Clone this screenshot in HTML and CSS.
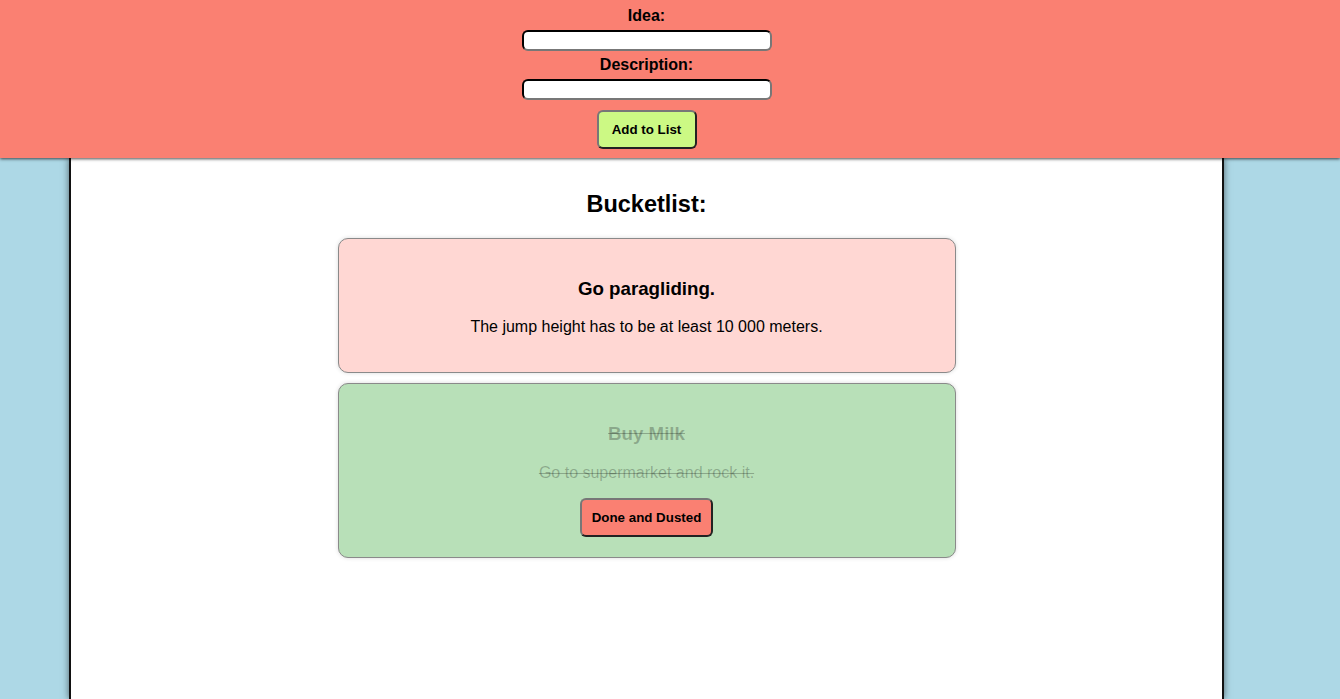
FILE: index.html
```html
<!DOCTYPE html>
<html>
<head>
<meta charset="utf-8">
<link rel="stylesheet" href="styles.css">
</head>
<body>
<header class="top">
  <form class="idea-form">
    <label class="lbl" for="idea">Idea:</label>
    <input class="field" id="idea" type="text">
    <label class="lbl lbl-2" for="desc">Description:</label>
    <input class="field" id="desc" type="text">
    <button class="btn btn-add" type="button">Add to List</button>
  </form>
</header>
<main class="main">
  <h2 class="title">Bucketlist:</h2>
  <div class="card card-open">
    <h3 class="card-h">Go paragliding.</h3>
    <p class="card-p">The jump height has to be at least 10 000 meters.</p>
  </div>
  <div class="card card-done">
    <h3 class="card-h done-text">Buy Milk</h3>
    <p class="card-p done-text">Go to supermarket and rock it.</p>
    <button class="btn btn-done" type="button">Done and Dusted</button>
  </div>
</main>
</body>
</html>
```
FILE: styles.css
```css
html, body {
  margin: 0;
  padding: 0;
}
body {
  background: #add8e6;
  font-family: "Liberation Sans", Arial, sans-serif;
  color: #000;
  min-height: 699px;
  overflow: hidden;
}
.top {
  position: relative;
  z-index: 2;
  background: #fa8072;
  box-shadow: 0 1px 3px rgba(0,0,0,0.7);
  height: 158px;
  box-sizing: border-box;
  padding-top: 7px;
}
.idea-form {
  width: 1155px;
  margin-left: 69px;
  display: flex;
  flex-direction: column;
  align-items: center;
}
.lbl {
  font-weight: bold;
  font-size: 16px;
  line-height: 18px;
  display: block;
}
.lbl-2 {
  margin-top: 5px;
}
.field {
  margin: 5px 0 0;
  width: 250px;
  height: 21px;
  box-sizing: border-box;
  border: 2px inset #767676;
  border-color: #222 #777 #777 #222;
  border-radius: 6px;
  background: #fff;
  padding: 0 4px;
}
.btn {
  font-family: "Liberation Sans", Arial, sans-serif;
  font-weight: bold;
  font-size: 13.33px;
  color: #000;
  border: 2px solid;
  border-color: #777 #222 #222 #777;
  border-radius: 6px;
  cursor: pointer;
}
.btn-add {
  margin-top: 10px;
  width: 100px;
  height: 39px;
  background: #ccf984;
  padding: 0;
}
.main {
  position: relative;
  z-index: 1;
  width: 1155px;
  margin-left: 69px;
  box-sizing: border-box;
  min-height: 541px;
  background: #fff;
  border-left: 2px solid #111;
  border-right: 2px solid #111;
  box-shadow: 0 0 7px rgba(0,0,0,0.55);
  padding-top: 1px;
  display: flex;
  flex-direction: column;
  align-items: center;
}
.title {
  font-size: 23.5px;
  font-weight: bold;
  margin: 31px 0 20px;
  line-height: 28px;
}
.card {
  width: 618px;
  box-sizing: border-box;
  border: 1px solid #8a8a8a;
  border-radius: 10px;
  padding: 20px;
  text-align: center;
  box-shadow: 0 0 4px rgba(0,0,0,0.15);
  margin-bottom: 10px;
  display: flex;
  flex-direction: column;
  align-items: center;
}
.card-open {
  background: #ffd7d3;
}
.card-done {
  background: #b8e0b8;
  padding-top: 21px;
}
.card-h {
  font-size: 18.72px;
  font-weight: bold;
  margin: 18.72px 0 0;
  line-height: 22px;
}
.card-p {
  font-size: 16px;
  margin: 18px 0 16px;
  line-height: 18px;
}
.card-done .card-p {
  margin-top: 19px;
}
.done-text {
  color: rgba(0,0,0,0.25);
  text-decoration: line-through;
}
.btn-done {
  background: #fa8072;
  padding: 0 10px;
  height: 39px;
}
```
